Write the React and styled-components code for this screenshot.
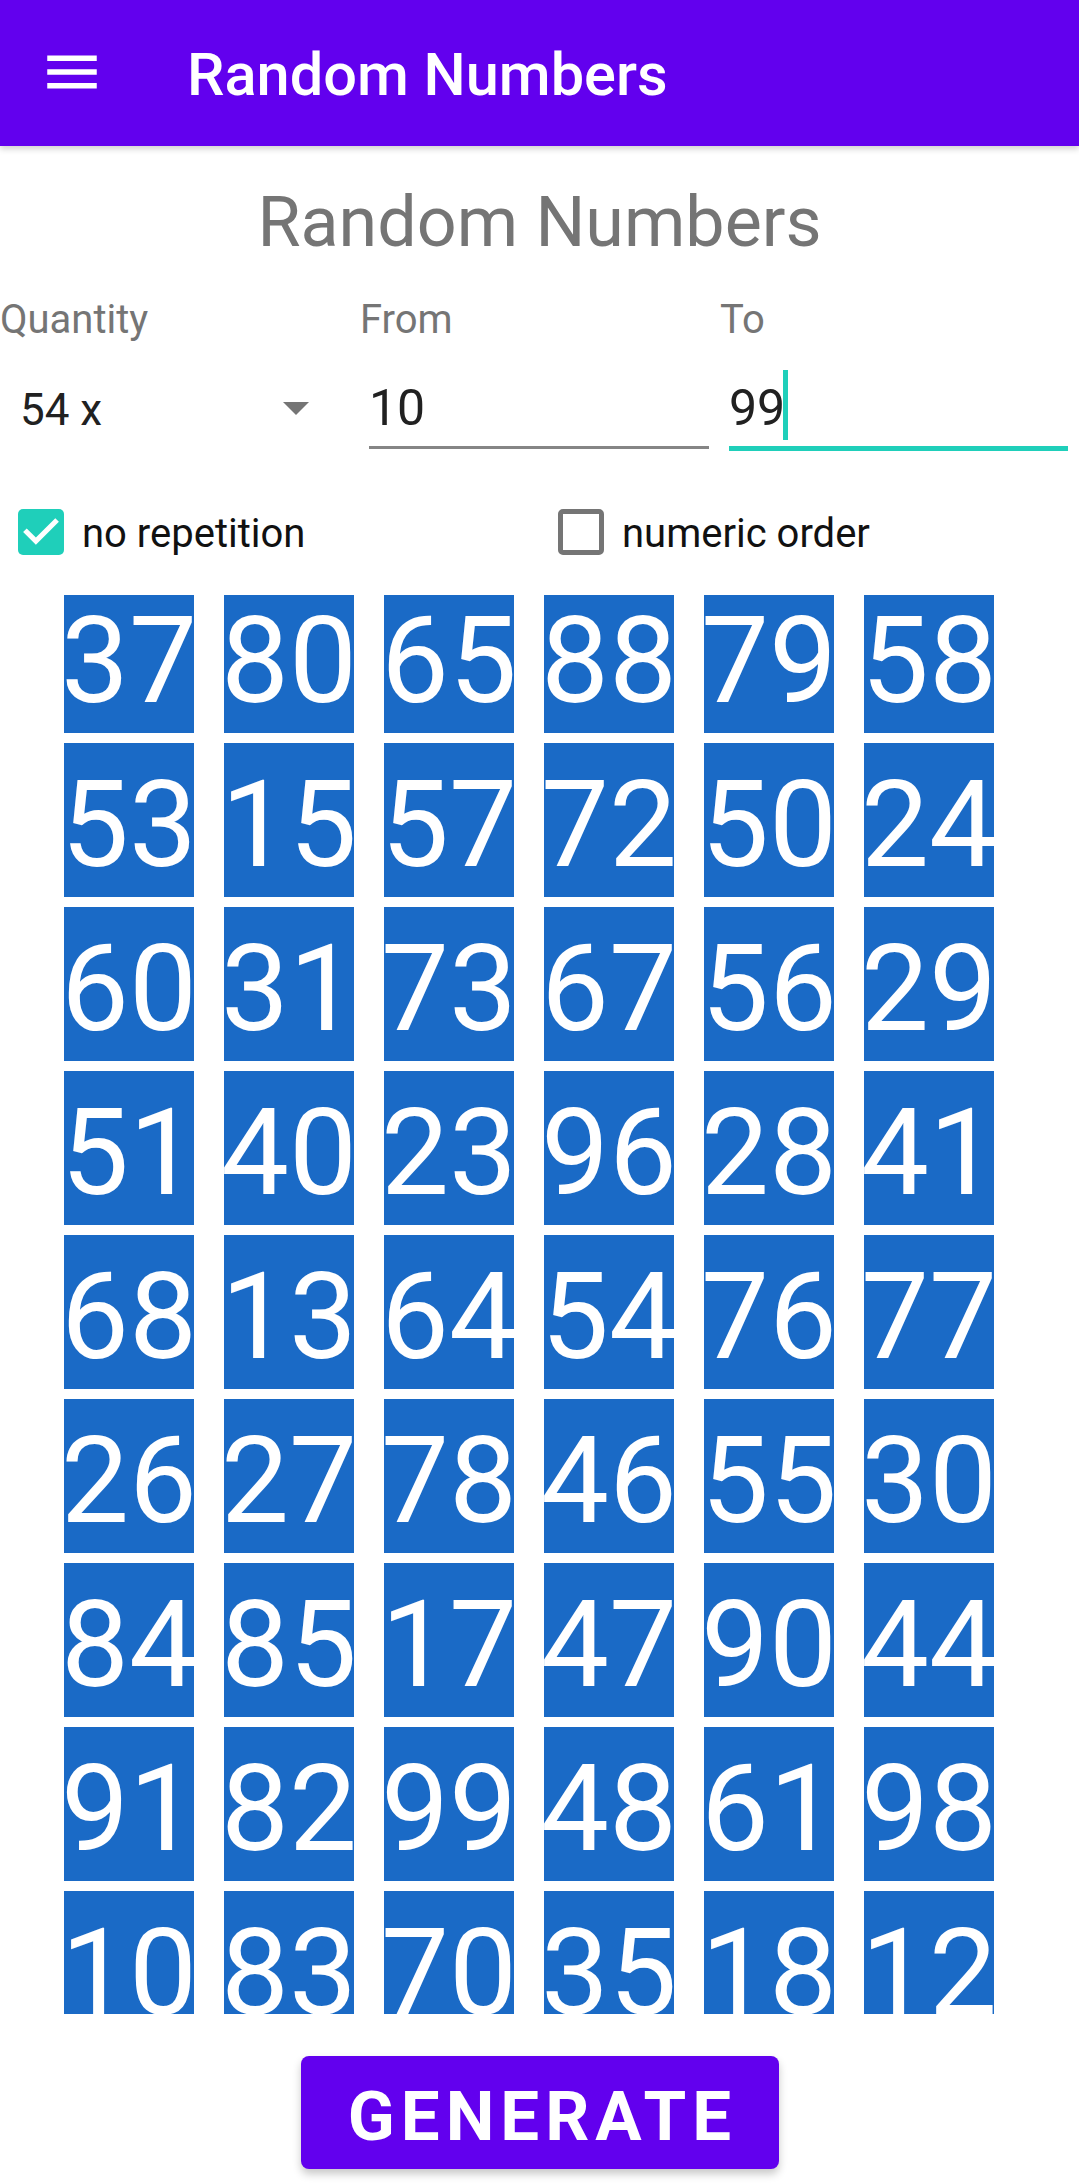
import styled, { createGlobalStyle } from "styled-components";

const GlobalStyle = createGlobalStyle`
  html, body {
    margin: 0;
    padding: 0;
    background: #ffffff;
  }
  body {
    font-family: Roboto, "Noto Sans", sans-serif;
    -webkit-font-smoothing: antialiased;
  }
`;

const Page = styled.div`
  width: 1079px;
  height: 2183px;
  background: #ffffff;
  overflow: hidden;
`;

const AppBar = styled.header`
  height: 146px;
  background: #6200ee;
  display: flex;
  align-items: flex-start;
  box-shadow: 0 3px 6px rgba(0, 0, 0, 0.18);
  position: relative;
  z-index: 1;
`;

const MenuButton = styled.svg`
  width: 66px;
  height: 66px;
  margin: 39px 0 0 39px;
  fill: #ffffff;
  flex-shrink: 0;
`;

const BarTitle = styled.h1`
  margin: 45px 0 0 82px;
  font-size: 59.5px;
  line-height: 60px;
  font-weight: 500;
  color: #ffffff;
  white-space: nowrap;
`;

const Heading = styled.h2`
  margin: 41px 0 0;
  font-size: 70px;
  line-height: 70px;
  font-weight: 400;
  color: #757575;
  text-align: center;
`;

const FieldGrid = styled.div`
  display: grid;
  grid-template-columns: 360px 360px 359px;
  margin-top: 41.5px;
  align-items: start;
`;

const Field = styled.div`
  display: flex;
  flex-direction: column;
`;

const Label = styled.span`
  font-size: 40px;
  line-height: 41px;
  color: #757575;
`;

const Spinner = styled.div`
  display: flex;
  justify-content: space-between;
  align-items: flex-start;
  width: 289px;
  padding-left: 20px;
`;

const SpinnerValue = styled.span`
  padding-top: 48.5px;
  font-size: 44px;
  line-height: 44px;
  color: #212121;
`;

const Caret = styled.svg`
  width: 26px;
  height: 13px;
  margin-top: 62.5px;
  fill: #757575;
`;

const Input = styled.div`
  width: ${(p) => p.$width}px;
  height: 50px;
  margin-left: 9px;
  padding: 43px 0 13px;
  font-size: 50px;
  line-height: 50px;
  color: #212121;
  border-bottom: ${(p) => (p.$focused ? "5px solid #1fcfba" : "3px solid #858585")};
`;

const Cursor = styled.span`
  display: inline-block;
  width: 5px;
  height: 70px;
  margin: -20px 0 -10px -2px;
  vertical-align: -5px;
  background: #1fcfba;
`;

const CheckRow = styled.div`
  display: grid;
  grid-template-columns: 540px 539px;
  margin-top: 58.5px;
`;

const CheckItem = styled.label`
  display: flex;
  align-items: flex-start;
  height: 46px;
  padding-left: 18px;
  gap: 18px;
`;

const Box = styled.span`
  width: 46px;
  height: 46px;
  box-sizing: border-box;
  border-radius: 5px;
  flex-shrink: 0;
  display: flex;
  background: ${(p) => (p.$checked ? "#1fcfba" : "#ffffff")};
  border: ${(p) => (p.$checked ? "none" : "5px solid #757575")};

  svg {
    width: 100%;
    height: 100%;
    fill: #ffffff;
  }
`;

const CheckText = styled.span`
  padding-top: 3px;
  font-size: 40px;
  line-height: 43px;
  color: #111111;
`;

const NumberViewport = styled.div`
  margin-top: 40px;
  height: 1419px;
  overflow: hidden;
`;

const NumberGrid = styled.div`
  margin-top: -16px;
  padding-left: 64px;
  display: grid;
  grid-template-columns: repeat(6, 130px);
  grid-auto-rows: 154px;
  column-gap: 30px;
  row-gap: 10px;
`;

const Tile = styled.div`
  box-sizing: border-box;
  height: 154px;
  padding-top: 11px;
  display: flex;
  justify-content: center;
  background: #1a6ac6;
  color: #ffffff;
  font-size: 121px;
  line-height: 142px;
  white-space: nowrap;
`;

const ButtonRow = styled.div`
  display: flex;
  justify-content: center;
  margin-top: 42px;
`;

const GenerateButton = styled.button`
  box-sizing: border-box;
  width: 478px;
  height: 113px;
  padding: 8px 0 0 6px;
  border: none;
  border-radius: 8px;
  background: #6200ee;
  color: #ffffff;
  font-family: Roboto, sans-serif;
  font-size: 69px;
  font-weight: 700;
  letter-spacing: 6px;
  line-height: 1;
  box-shadow: 0 5px 8px rgba(0, 0, 0, 0.22);
  display: flex;
  align-items: center;
  justify-content: center;
`;

const numbers = [
  37, 80, 65, 88, 79, 58,
  53, 15, 57, 72, 50, 24,
  60, 31, 73, 67, 56, 29,
  51, 40, 23, 96, 28, 41,
  68, 13, 64, 54, 76, 77,
  26, 27, 78, 46, 55, 30,
  84, 85, 17, 47, 90, 44,
  91, 82, 99, 48, 61, 98,
  10, 83, 70, 35, 18, 12,
];

const App = () => {
  return (
    <>
      <GlobalStyle />
      <Page>
        <AppBar>
          <MenuButton viewBox="0 0 24 24">
            <path d="M3 18h18v-2H3v2zm0-5h18v-2H3v2zm0-7v2h18V6H3z" />
          </MenuButton>
          <BarTitle>Random Numbers</BarTitle>
        </AppBar>

        <Heading>Random Numbers</Heading>

        <FieldGrid>
          <Field>
            <Label>Quantity</Label>
            <Spinner>
              <SpinnerValue>54 x</SpinnerValue>
              <Caret viewBox="0 0 26 13">
                <path d="M0 0h26L13 13z" />
              </Caret>
            </Spinner>
          </Field>
          <Field>
            <Label>From</Label>
            <Input $width={340}>10</Input>
          </Field>
          <Field>
            <Label>To</Label>
            <Input $width={339} $focused>
              99
              <Cursor />
            </Input>
          </Field>
        </FieldGrid>

        <CheckRow>
          <CheckItem>
            <Box $checked>
              <svg viewBox="3 3 18 18">
                <path d="M10 17l-5-5 1.41-1.41L10 14.17l7.59-7.59L19 8l-9 9z" />
              </svg>
            </Box>
            <CheckText>no repetition</CheckText>
          </CheckItem>
          <CheckItem>
            <Box />
            <CheckText>numeric order</CheckText>
          </CheckItem>
        </CheckRow>

        <NumberViewport>
          <NumberGrid>
            {numbers.map((n, i) => (
              <Tile key={i}>{n}</Tile>
            ))}
          </NumberGrid>
        </NumberViewport>

        <ButtonRow>
          <GenerateButton>GENERATE</GenerateButton>
        </ButtonRow>
      </Page>
    </>
  );
};

export default App;
